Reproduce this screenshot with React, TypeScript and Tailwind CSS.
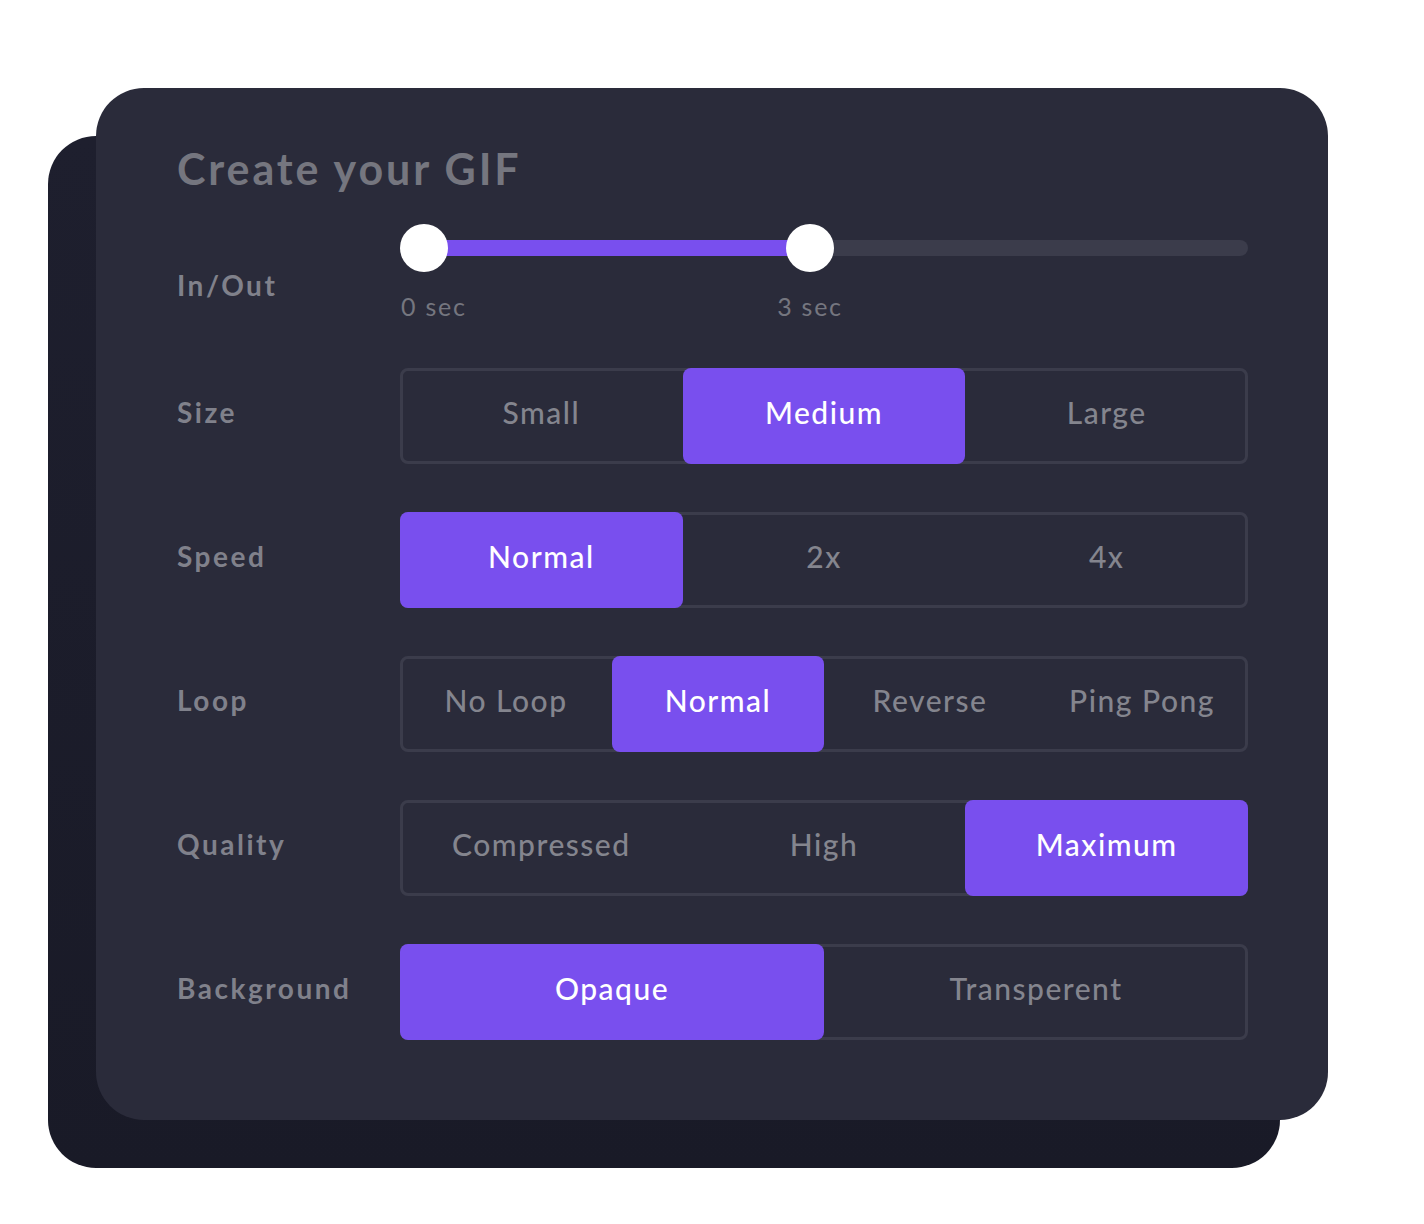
import React from "react";

type SegProps = { options: string[]; active: number };

function Segmented({ options, active }: SegProps) {
  return (
    <div className="relative flex h-[96px] w-[848px]">
      <div className="pointer-events-none absolute inset-0 rounded-[8px] border-[3px] border-[#3b3c4b]" />
      {options.map((o, i) => (
        <div
          key={o}
          className={
            i === active
              ? "relative z-10 flex flex-1 items-center justify-center rounded-[8px] bg-[#794fee] pb-[6px] text-[30px] font-medium tracking-[0.05em] text-white"
              : "relative z-10 flex flex-1 items-center justify-center pb-[6px] text-[30px] font-medium tracking-[0.05em] text-[#84858e]"
          }
        >
          {o}
        </div>
      ))}
    </div>
  );
}

function Row({ label, children }: { label: string; children: React.ReactNode }) {
  return (
    <div className="flex items-center">
      <div className="mb-[8px] w-[223px] text-[28px] font-bold tracking-[0.09em] text-[#80818b]">{label}</div>
      {children}
    </div>
  );
}

export default function App() {
  const start = 0;
  const end = 386;
  return (
    <div
      className="min-h-[1224px] w-[1424px] bg-white pl-[96px] pt-[88px]"
      style={{ fontFamily: "Lato, 'Noto Sans', sans-serif" }}
    >
      <div className="relative h-[1032px] w-[1232px]">
        <div className="absolute left-[-48px] top-[48px] h-[1032px] w-[1232px] rounded-[48px] bg-gradient-to-b from-[#1e1f2e] to-[#191a27]" />
        <div className="relative h-[1032px] w-[1232px] rounded-[48px] bg-[#2a2b3a] pl-[81px] pt-[55px]">
          <h1 className="text-[43px] font-bold leading-[1.2] tracking-[0.067em] text-[#75767f]">Create your GIF</h1>

          <div className="mt-[29px] flex items-start">
            <div className="mt-[45px] w-[223px] text-[28px] font-bold leading-[1.2] tracking-[0.09em] text-[#80818b]">In/Out</div>
            <div className="w-[848px]">
              <div className="relative h-[48px]">
                <div className="absolute left-[24px] right-0 top-[16px] h-[16px] rounded-full bg-[#3b3c4b]" />
                <div
                  className="absolute top-[16px] h-[16px] bg-[#794fee]"
                  style={{ left: 24 + start, width: end - start }}
                />
                <div
                  className="absolute top-0 h-[48px] w-[48px] rounded-full bg-white"
                  style={{ left: start }}
                />
                <div
                  className="absolute top-0 h-[48px] w-[48px] rounded-full bg-white"
                  style={{ left: end }}
                />
              </div>
              <div className="relative mt-[19px] h-[30px] text-[25px] leading-[1.2] tracking-[0.07em] text-[#75767f]">
                <span className="absolute left-[1px] top-0">0 sec</span>
                <span className="absolute top-0 -translate-x-1/2 whitespace-nowrap" style={{ left: end + 24 }}>
                  3 sec
                </span>
              </div>
            </div>
          </div>

          <div className="mt-[47px] flex flex-col gap-[48px]">
            <Row label="Size">
              <Segmented options={["Small", "Medium", "Large"]} active={1} />
            </Row>
            <Row label="Speed">
              <Segmented options={["Normal", "2x", "4x"]} active={0} />
            </Row>
            <Row label="Loop">
              <Segmented options={["No Loop", "Normal", "Reverse", "Ping Pong"]} active={1} />
            </Row>
            <Row label="Quality">
              <Segmented options={["Compressed", "High", "Maximum"]} active={2} />
            </Row>
            <Row label="Background">
              <Segmented options={["Opaque", "Transperent"]} active={0} />
            </Row>
          </div>
        </div>
      </div>
    </div>
  );
}
